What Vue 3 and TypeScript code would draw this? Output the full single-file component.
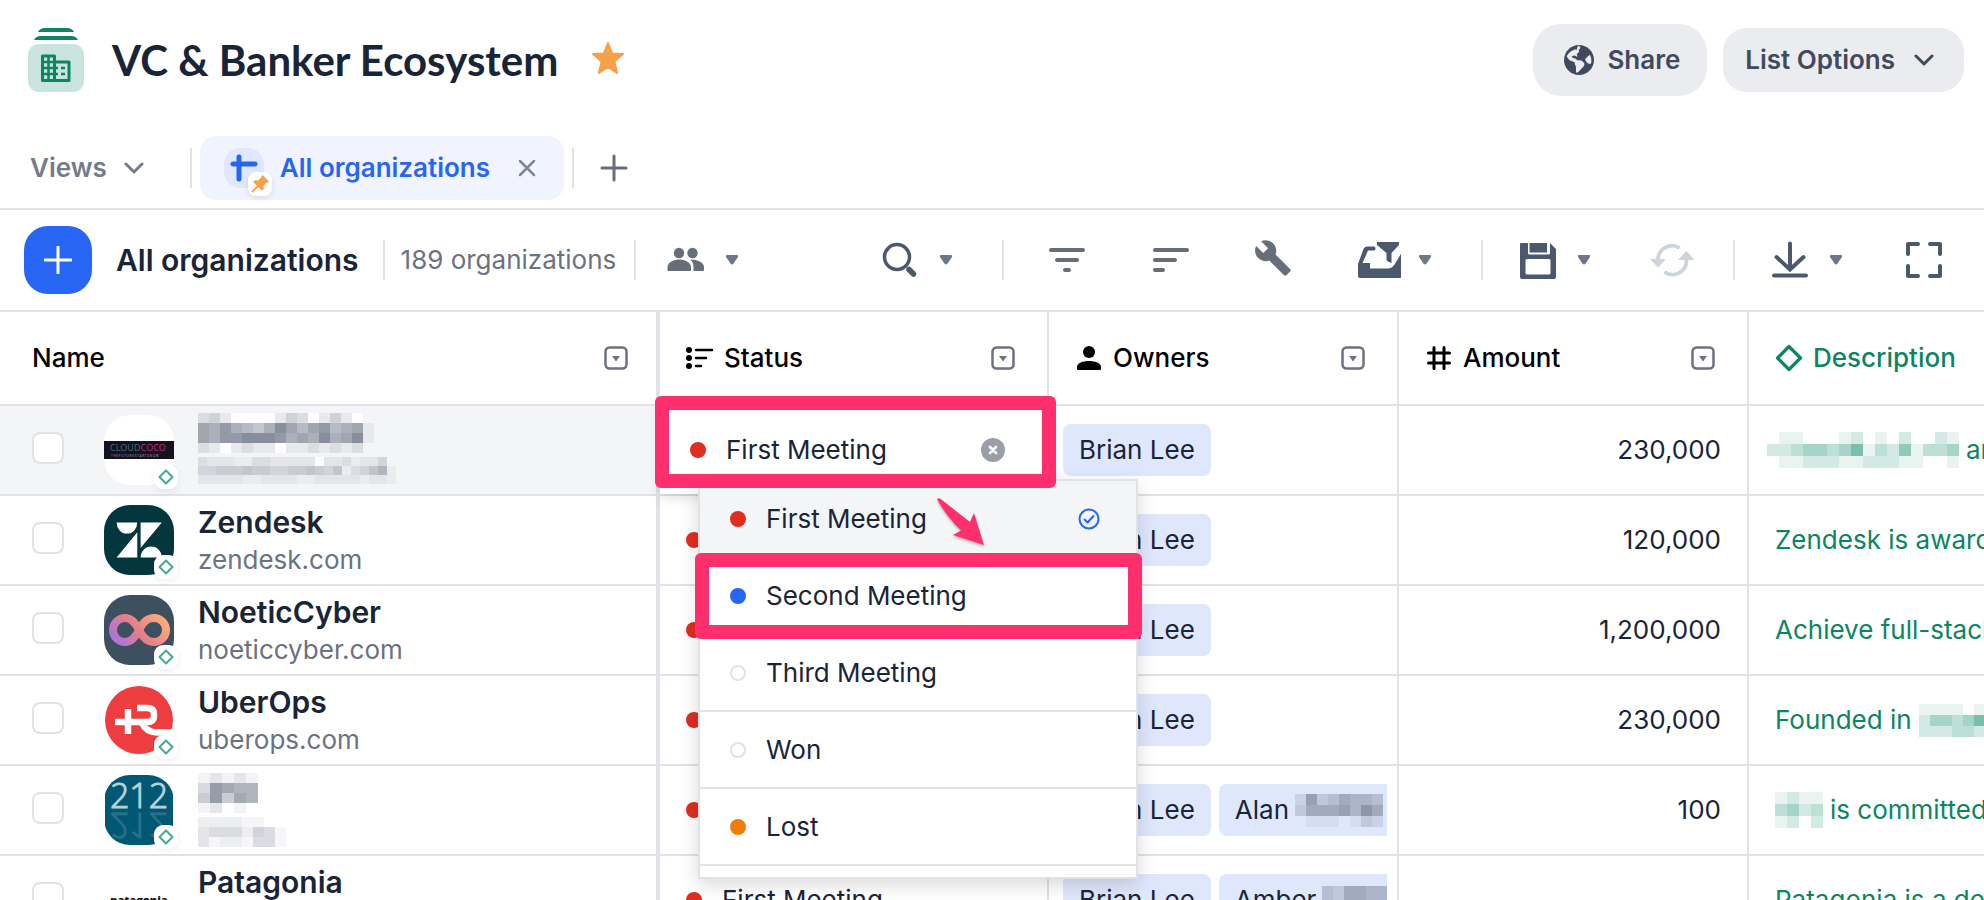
<script setup lang="ts">
import { ref } from 'vue'

interface Mosaic { w: number; h: number; color: string; rows: string[] }
interface Owner { name: string; hidden?: Mosaic }
interface Row {
  logo: string
  name?: string
  domain?: string
  nameMosaic?: Mosaic
  domainMosaic?: Mosaic
  owners: Owner[]
  amount: string
  descBefore?: string
  descMosaic?: Mosaic
  descAfter?: string
}

const SLATE = '#6f7788'
const GREEN = '#0b8a68'

const rows: Row[] = [
  {
    logo: 'cloudcoco',
    nameMosaic: { w: 11, h: 10, color: SLATE, rows: ['231wwww132w131w00', '76865469757856710', '76889998676967910', '21w1211w112121200'] },
    domainMosaic: { w: 9, h: 9, color: SLATE, rows: ['3222113322222w22312240', '4455565544556546134681', '2222211222211222221221'] },
    owners: [{ name: 'Brian Lee' }],
    amount: '230,000',
    descMosaic: { w: 12, h: 12, color: GREEN, rows: ['0110001201020021', '2234434613251334', '0112221122211001'] },
    descAfter: 'an award-winning provider',
  },
  { logo: 'zendesk', name: 'Zendesk', domain: 'zendesk.com', owners: [{ name: 'Brian Lee' }], amount: '120,000', descBefore: 'Zendesk is award-winning software' },
  { logo: 'noetic', name: 'NoeticCyber', domain: 'noeticcyber.com', owners: [{ name: 'Brian Lee' }], amount: '1,200,000', descBefore: 'Achieve full-stack visibility' },
  {
    logo: 'uberops', name: 'UberOps', domain: 'uberops.com', owners: [{ name: 'Brian Lee' }], amount: '230,000', descBefore: 'Founded in',
    descMosaic: { w: 11, h: 11, color: GREEN, rows: ['11110111', '24434643', '22233232'] },
  },
  {
    logo: 'two12',
    nameMosaic: { w: 12, h: 10, color: SLATE, rows: ['12121', '38766', '48476', '12w10'] },
    domainMosaic: { w: 11, h: 10, color: SLATE, rows: ['22221100', '34442541', '31221441'] },
    owners: [
      { name: 'Brian Lee' },
      { name: 'Alan', hidden: { w: 11, h: 11, color: SLATE, rows: ['27346554', '36667586', '01110132'] } },
    ],
    amount: '100',
    descMosaic: { w: 12, h: 12, color: GREEN, rows: ['1211', '3423', '1202'] },
    descAfter: 'is committed to growth',
  },
  {
    logo: 'patagonia', name: 'Patagonia', domain: 'patagonia.com',
    owners: [
      { name: 'Brian Lee' },
      { name: 'Amber', hidden: { w: 11, h: 14, color: SLATE, rows: ['4366550', '3465540'] } },
    ],
    amount: '—', descBefore: 'Patagonia is a designer of outdoor clothing',
  },
]

const options = [
  { label: 'First Meeting', color: 'red' },
  { label: 'Second Meeting', color: 'blue' },
  { label: 'Third Meeting', color: 'none' },
  { label: 'Won', color: 'none' },
  { label: 'Lost', color: 'orange' },
]
const selected = ref('First Meeting')
const marked = 'Second Meeting'

function cells(m: Mosaic) {
  return m.rows.flatMap((line, y) =>
    [...line].map((c, x) => ({
      x: x * m.w,
      y: y * m.h,
      fill: c === 'w' ? '#fff' : m.color,
      opacity: c === 'w' ? 0.9 : Number(c) / 11,
    })),
  )
}
const mosaicWidth = (m: Mosaic) => m.rows[0].length * m.w
const mosaicHeight = (m: Mosaic) => m.rows.length * m.h
</script>

<template>
  <div class="app">
    <header class="head">
      <svg class="list-icon" width="56" height="64" viewBox="0 0 56 64" aria-hidden="true">
        <path d="M10 4q2-4 7-4h22q5 0 7 4zM6 12q2-4 7-4h30q5 0 7 4z" fill="#0b8562" />
        <rect y="16" width="56" height="48" rx="11" fill="#c8e4dd" />
        <g fill="none" stroke="#0b8562" stroke-width="3" stroke-linejoin="round">
          <path d="M14.500 28h12v24.500h-12zM26.500 34h14.500v18.500h-14.500" />
          <path d="M14 34h12M14 40h12M14 46h12M20.500 28v24" stroke-width="2.500" />
          <path d="M33 40h4M33 46h4M27 40h3M27 46h3" stroke-width="2.500" />
        </g>
      </svg>
      <h1>VC &amp; Banker Ecosystem</h1>
      <button class="star" aria-label="Favorite">
        <svg width="34" height="34" viewBox="0 0 34 34"><path d="M17 2l4.200 10.500 10.800.6-8.600 7.400 2.800 11.500-9.200-6.200L7.800 32l2.800-11.500L2 13.100l10.800-.6z" fill="#f5a04a" stroke="#f5a04a" stroke-width="2" stroke-linejoin="round" /></svg>
      </button>
      <div class="head-actions">
        <button class="pill share">
          <svg width="30" height="30" viewBox="0 8 496 496" aria-hidden="true"><path fill="#404a5c" d="M248 8C111.030 8 0 119.030 0 256s111.030 248 248 248 248-111.030 248-248S384.970 8 248 8z" /><path fill="#ebecf0" d="M215 52v18c0 12-12 20-24 14l-8-4C120 100 72 140 44 196q22 36 46 66c26 12 60 20 90 34-6 16 0 40 12 56 8 10 6 26 6 40v70q18 6 38-8l76-78q42-44 14-78l-32-30c-24-8-50-6-78-8-12-20-26-32-52-34l-32-14c-8-14 8-22 22-26l26-4 30 22 14-12-14-36 30-26 10-22-8-20 24-22q12-12 0-26l-24-22zM400 190l-46 46q-8 14 2 30l22 32q8 12 22 16l42 10q14-34 10-74-4-46-26-80z" /></svg>
          Share
        </button>
        <button class="pill options">
          List Options
          <svg width="20" height="12" viewBox="0 0 20 12" aria-hidden="true"><path d="M2 2l8 8 8-8" class="line" /></svg>
        </button>
      </div>
    </header>

    <nav class="tabs" aria-label="Views">
      <button class="views">
        Views
        <svg width="20" height="12" viewBox="0 0 20 12" aria-hidden="true"><path d="M2 2l8 8 8-8" class="line" /></svg>
      </button>
      <span class="rule" />
      <div class="tab">
        <span class="tab-icon">
          <svg width="40" height="40" viewBox="0 0 40 40" aria-hidden="true"><path d="M9 16h22M15 9v22" fill="none" stroke="#2765f4" stroke-width="5" stroke-linecap="round" /></svg>
          <span class="pin">
            <svg width="20" height="20" viewBox="0 0 20 20" aria-hidden="true"><path d="M12.500 1l6.500 6.500-1.200 1.200-1-.2-3.300 3.300.2 3.300-1.600 1.700-3.800-3.800L2.600 18.700 1.300 17.400 7 11.700 3.200 7.900l1.700-1.600 3.300.2 3.300-3.300-.2-1z" fill="#f5a04a" /></svg>
          </span>
        </span>
        <a href="#all">All organizations</a>
        <button aria-label="Close view">
          <svg width="18" height="18" viewBox="0 0 18 18"><path d="M2 2l14 14M16 2L2 16" fill="none" stroke="#808794" stroke-width="2.500" stroke-linecap="round" /></svg>
        </button>
      </div>
      <span class="rule" />
      <button class="add-view" aria-label="Add view">
        <svg width="28" height="28" viewBox="0 0 28 28"><path d="M14 2v24M2 14h24" fill="none" stroke="#666e7a" stroke-width="3" stroke-linecap="round" /></svg>
      </button>
    </nav>

    <div class="toolbar">
      <button class="create" aria-label="Add organization">
        <svg width="28" height="28" viewBox="0 0 28 28"><path d="M14 1v26M1 14h26" fill="none" stroke="#fff" stroke-width="3" stroke-linecap="round" /></svg>
      </button>
      <h2>All organizations</h2>
      <span class="rule" />
      <span class="count">189 organizations</span>
      <span class="rule" />
      <button class="tool people" aria-label="Sharing">
        <svg width="44" height="44" viewBox="0 0 44 44"><g fill="#666e7a"><circle cx="15" cy="15" r="5.200" /><circle cx="28.500" cy="15" r="5.200" /><path d="M3.500 32v-3c0-5 7-7.500 11.800-7.500S27 24 27 29v3q0 1-1 1H4.500q-1 0-1-1zM27.500 21.500c5 .3 12.500 2.500 12.500 7.500v3q0 1-1 1h-9.500v-4.500c0-3-1.200-5.400-3-6.800z" /></g></svg>
        <svg class="caret" width="12" height="10" viewBox="0 0 12 10"><path d="M0 1q0-1 1-1h10q1 0 1 1v1L7.500 8.500q-1.500 2-3 0L0 2z" /></svg>
      </button>

      <div class="tools">
        <button class="tool" aria-label="Search">
          <svg width="44" height="44" viewBox="0 0 44 44"><g fill="none" stroke="#4b586e"><circle cx="19" cy="19" r="12.500" stroke-width="3.500" /><path d="M31 31.500l4.500 4.500" stroke-width="5.500" stroke-linecap="round" /></g></svg>
          <svg class="caret" width="12" height="10" viewBox="0 0 12 10"><path d="M0 1q0-1 1-1h10q1 0 1 1v1L7.500 8.500q-1.500 2-3 0L0 2z" /></svg>
        </button>
        <span class="rule after-caret" />
        <div class="group view-group">
          <button class="tool" aria-label="Filter"><svg width="44" height="44" viewBox="0 0 44 44"><path d="M6 12h32M12 22h20M20 32h4" class="bars" /></svg></button>
          <button class="tool" aria-label="Sort"><svg width="44" height="44" viewBox="0 0 44 44"><path d="M6 12h32M6 22h20M6 32h8" class="bars" /></svg></button>
          <button class="tool" aria-label="Settings"><svg width="44" height="44" viewBox="0 0 44 44"><g transform="translate(.5 .5) scale(1.620)"><path fill="#666e7a" d="M22.700 19l-9.100-9.100c.9-2.300.4-5-1.500-6.900-2-2-5-2.400-7.400-1.300L9 6 6 9 1.600 4.700C.4 7.100.9 10.100 2.900 12.100c1.900 1.900 4.600 2.400 6.900 1.500l9.100 9.100c.4.400 1 .4 1.400 0l2.300-2.300c.5-.4.5-1.100.1-1.400z" /></g></svg></button>
          <button class="tool" aria-label="Saved filters">
            <svg width="44" height="44" viewBox="0 0 44 44"><g fill="#4b586e"><path d="M20 4h22v3l-7.500 8v10q-4-1-5-3v-7L20 7zM1 26L6.500 11q1-2.500 3.500-2.500h7q1.500 0 1.500 2t-1.500 2h-6L5.500 25h7.500v5.500h17.500q5 0 8-5.500l6-10v23q0 2-2 2H3q-2 0-2-2z" /></g></svg>
            <svg class="caret" width="12" height="10" viewBox="0 0 12 10"><path d="M0 1q0-1 1-1h10q1 0 1 1v1L7.500 8.500q-1.500 2-3 0L0 2z" /></svg>
          </button>
        </div>
        <span class="rule after-caret" />
        <div class="group">
          <button class="tool" aria-label="Save">
            <svg width="44" height="44" viewBox="0 0 44 44"><path fill="#4b586e" fill-rule="evenodd" d="M5 5h7v10q0 1.500 1.500 1.500h19q1.500 0 1.500-1.500V5l6 6v28q0 2-2 2H6q-2 0-2-2V6q0-1 1-1zM11 21q-1.500 0-1.500 1.500V35q0 1.500 1.500 1.500h22q1.500 0 1.500-1.500V22.500q0-1.500-1.500-1.500zM13.500 5h17.500v9.500H13.500z" /></svg>
            <svg class="caret" width="12" height="10" viewBox="0 0 12 10"><path d="M0 1q0-1 1-1h10q1 0 1 1v1L7.500 8.500q-1.500 2-3 0L0 2z" /></svg>
          </button>
          <button class="tool" aria-label="Refresh" disabled>
            <svg width="44" height="44" viewBox="0 0 44 44"><g fill="none" stroke="#cdd4de" stroke-width="3.800"><path d="M8 22A14 14 0 0 1 29.500 10M36.500 22A14 14 0 0 1 14.500 34" /></g><path d="M0 21h16l-8 8.500zM28 22l8.500-9 8 9z" fill="#cdd4de" /></svg>
          </button>
        </div>
        <span class="rule after-icon" />
        <div class="group">
          <button class="tool" aria-label="Download">
            <svg width="44" height="44" viewBox="0 0 44 44"><path d="M22 5.500v24M8.500 19L22 31.500 35.500 19M6 37.500h32" fill="none" stroke="#4b586e" stroke-width="4" stroke-linecap="round" /></svg>
            <svg class="caret" width="12" height="10" viewBox="0 0 12 10"><path d="M0 1q0-1 1-1h10q1 0 1 1v1L7.500 8.500q-1.500 2-3 0L0 2z" /></svg>
          </button>
          <button class="tool" aria-label="Full screen"><svg width="44" height="44" viewBox="0 0 44 44"><path d="M6 16V6h10M28 6h10v10M38 28v10H28M16 38H6V28" fill="none" stroke="#4b586e" stroke-width="4" stroke-linecap="round" stroke-linejoin="round" /></svg></button>
        </div>
      </div>
    </div>

    <table>
      <colgroup><col class="c-name" /><col class="c-status" /><col class="c-owner" /><col class="c-amount" /><col /></colgroup>
      <thead>
        <tr>
          <th class="name-cell"><div class="th"><span>Name</span><button class="col-menu" aria-label="Name column menu"><svg width="24" height="24" viewBox="0 0 24 24"><rect x="1.500" y="1.500" width="21" height="21" rx="4" /><path d="M8 10h8l-4 5.500z" /></svg></button></div></th>
          <th><div class="th"><svg width="28" height="24" viewBox="0 0 28 24"><path d="M10 4h16M10 12h10M10 20h5" fill="none" stroke="#000" stroke-width="2.500" stroke-linecap="round" /><circle cx="3" cy="4" r="3" /><circle cx="3" cy="12" r="3" /><circle cx="3" cy="20" r="3" /></svg><span>Status</span><button class="col-menu" aria-label="Status column menu"><svg width="24" height="24" viewBox="0 0 24 24"><rect x="1.500" y="1.500" width="21" height="21" rx="4" /><path d="M8 10h8l-4 5.500z" /></svg></button></div></th>
          <th><div class="th"><svg width="28" height="24" viewBox="-2 0 28 24"><circle cx="12" cy="6" r="6" /><path d="M0 23v-2c0-4 6-6 12-6s12 2 12 6v2q0 1-1 1H1q-1 0-1-1z" /></svg><span>Owners</span><button class="col-menu" aria-label="Owners column menu"><svg width="24" height="24" viewBox="0 0 24 24"><rect x="1.500" y="1.500" width="21" height="21" rx="4" /><path d="M8 10h8l-4 5.500z" /></svg></button></div></th>
          <th><div class="th"><svg width="28" height="24" viewBox="-2 0 28 24"><path d="M7 1.500v21M17 1.500v21M1.500 7h21M1.500 17h21" fill="none" stroke="#000" stroke-width="3" stroke-linecap="round" /></svg><span>Amount</span><button class="col-menu" aria-label="Amount column menu"><svg width="24" height="24" viewBox="0 0 24 24"><rect x="1.500" y="1.500" width="21" height="21" rx="4" /><path d="M8 10h8l-4 5.500z" /></svg></button></div></th>
          <th class="desc"><div class="th"><svg width="28" height="28" viewBox="0 0 28 28"><path d="M14 2.500L25.500 14 14 25.500 2.500 14z" fill="none" stroke="#0b8562" stroke-width="3.200" stroke-linejoin="round" /></svg><span>Description</span></div></th>
        </tr>
      </thead>
      <tbody>
        <tr v-for="(row, i) in rows" :key="row.logo">
          <td class="name-cell" :class="{ active: i === 0 }">
            <div class="org">
              <input type="checkbox" :aria-label="'Select ' + (row.name ?? 'organization')" />
              <span class="avatar">
                <svg width="70" height="70" viewBox="0 0 70 70" aria-hidden="true">
                  <template v-if="row.logo === 'cloudcoco'">
                    <rect width="70" height="70" fill="#fff" />
                    <rect y="26" width="70" height="18" fill="#15121f" />
                    <text x="6" y="36" font-family="Open Sans, sans-serif" font-size="9"><tspan fill="#42717a">CLOUD</tspan><tspan fill="#c92a84">COCO</tspan></text>
                    <text x="7" y="42" font-family="Open Sans, sans-serif" font-size="3" fill="#a9a9b5">T H E F U T U R E S T A R T S N O W</text>
                  </template>
                  <template v-else-if="row.logo === 'zendesk'">
                    <rect width="70" height="70" fill="#03363d" />
                    <path fill="#fff" d="M12.600 17.600h20.700a10.350 11 0 0 1-20.700 0zM36.600 17.600h21.200L36.600 43zM33.300 27.300v25.300H12.600zM36.600 52.600a10.600 11 0 0 1 21.200 0z" />
                  </template>
                  <template v-else-if="row.logo === 'noetic'">
                    <defs><linearGradient id="noetic" x1="0" x2="1" y1=".7" y2=".3"><stop offset="0" stop-color="#b274d6" /><stop offset=".45" stop-color="#e37f8c" /><stop offset="1" stop-color="#fba87c" /></linearGradient></defs>
                    <rect width="70" height="70" fill="#3d5060" />
                    <path d="M35 35C31 27 27 23 21 23a12 12 0 0 0 0 24c6 0 10-4 14-12s8-12 15-12a12 12 0 0 1 0 24c-6 0-11-4-15-12z" fill="none" stroke="url(#noetic)" stroke-width="8" />
                  </template>
                  <template v-else-if="row.logo === 'uberops'">
                    <rect width="70" height="70" fill="#fff" />
                    <circle cx="35" cy="35" r="34" fill="#ee3d3e" />
                    <path d="M24 24v25M11 37h32q7 0 7-6v-2q0-6-7-6H33M38 38q4 9 15 9.500h15" fill="none" stroke="#fff" stroke-width="6.500" />
                  </template>
                  <template v-else-if="row.logo === 'two12'">
                    <rect x="1" width="68" height="70" fill="#005873" />
                    <g font-family="Open Sans, sans-serif" font-size="34" text-anchor="middle" font-weight="300">
                      <text x="35" y="33" fill="#b5d2da" stroke="#b5d2da">212</text>
                      <text x="35" y="-38" transform="scale(1 -1)" fill="#2b7189" stroke="#2b7189">212</text>
                    </g>
                  </template>
                  <template v-else>
                    <rect width="70" height="70" fill="#fff" />
                    <text x="35" y="39" font-family="Open Sans, sans-serif" font-weight="800" font-size="11" text-anchor="middle" fill="#111">patagonia</text>
                  </template>
                </svg>
                <span class="badge"><svg width="16" height="16" viewBox="0 0 16 16" aria-hidden="true"><path d="M8 1.500L14.500 8 8 14.500 1.500 8z" fill="none" stroke="#47a98d" stroke-width="2" stroke-linejoin="round" /></svg></span>
              </span>
              <div class="org-text">
                <span class="org-name">
                  <template v-if="row.name">{{ row.name }}</template>
                  <svg v-else-if="row.nameMosaic" :width="mosaicWidth(row.nameMosaic)" :height="mosaicHeight(row.nameMosaic)" role="img" aria-label="Hidden name" shape-rendering="crispEdges">
                    <rect v-for="(c, k) in cells(row.nameMosaic)" :key="k" :x="c.x" :y="c.y" :width="row.nameMosaic.w" :height="row.nameMosaic.h" :fill="c.fill" :fill-opacity="c.opacity" />
                  </svg>
                </span>
                <span class="org-domain">
                  <template v-if="row.domain">{{ row.domain }}</template>
                  <svg v-else-if="row.domainMosaic" :width="mosaicWidth(row.domainMosaic)" :height="mosaicHeight(row.domainMosaic)" role="img" aria-label="Hidden domain" shape-rendering="crispEdges">
                    <rect v-for="(c, k) in cells(row.domainMosaic)" :key="k" :x="c.x" :y="c.y" :width="row.domainMosaic.w" :height="row.domainMosaic.h" :fill="c.fill" :fill-opacity="c.opacity * 0.7" />
                  </svg>
                </span>
              </div>
            </div>
          </td>

          <td class="status">
            <div v-if="i > 0" class="status-value"><span class="dot red" />First Meeting</div>
            <template v-else>
              <div class="editor">
                <span class="dot red" /><span class="editor-text">{{ selected }}</span>
                <button class="clear" aria-label="Clear status"><svg width="24" height="24" viewBox="0 0 24 24"><circle cx="12" cy="12" r="12" fill="#9a9ea8" /><path d="M9 9l6 6M15 9l-6 6" stroke="#fff" stroke-width="2.800" stroke-linecap="round" /></svg></button>
              </div>
              <div class="menu">
                <ul>
                  <li v-for="o in options" :key="o.label" :class="{ chosen: o.label === selected }">
                    <button @click="selected = o.label">
                      <span class="dot" :class="o.color" />{{ o.label }}
                      <svg v-if="o.label === selected" class="check" width="22" height="22" viewBox="0 0 22 22" aria-hidden="true"><circle cx="11" cy="11" r="9.500" /><path d="M6.500 11.500l3 3 6-6.500" /></svg>
                    </button>
                    <span v-if="o.label === marked" class="frame item-frame" />
                  </li>
                </ul>
                <svg class="pointer" width="56" height="56" viewBox="0 0 56 56" aria-hidden="true"><path d="M3 3Q5 1 8 4L36 26l4-9 10 32-31-10 8-4.500Q12 20 3 3z" fill="#ff2f6d" /></svg>
              </div>
              <span class="frame cell-frame" />
            </template>
          </td>

          <td>
            <div class="owners">
              <span v-for="o in row.owners" :key="o.name" class="chip">
                {{ o.name }}
                <svg v-if="o.hidden" :width="mosaicWidth(o.hidden)" :height="mosaicHeight(o.hidden)" role="img" aria-label="Hidden surname" shape-rendering="crispEdges">
                  <rect v-for="(c, k) in cells(o.hidden)" :key="k" :x="c.x" :y="c.y" :width="o.hidden.w" :height="o.hidden.h" :fill="c.fill" :fill-opacity="c.opacity" />
                </svg>
              </span>
            </div>
          </td>
          <td class="amount" :class="{ empty: row.amount === '—' }">{{ row.amount }}</td>
          <td class="desc">
            <div class="desc-line">
              <span v-if="row.descBefore">{{ row.descBefore }}</span>
              <svg v-if="row.descMosaic" :class="{ lead: i === 0 }" :width="mosaicWidth(row.descMosaic)" :height="mosaicHeight(row.descMosaic)" role="img" aria-label="Hidden text" shape-rendering="crispEdges">
                <rect v-for="(c, k) in cells(row.descMosaic)" :key="k" :x="c.x" :y="c.y" :width="row.descMosaic.w" :height="row.descMosaic.h" :fill="c.fill" :fill-opacity="c.opacity" />
              </svg>
              <span v-if="row.descAfter">{{ row.descAfter }}</span>
            </div>
          </td>
        </tr>
      </tbody>
    </table>
  </div>
</template>

<style>
body { margin: 0; background: #fff; }
</style>

<style scoped>
.app {
  --line: #e1e2e8;
  --ink: #1a2437;
  --muted: #6b7280;
  --pink: #ff2f6d;
  height: 100vh;
  overflow: hidden;
  box-sizing: border-box;
  background: #fff;
  color: var(--ink);
  font-family: Inter, "Liberation Sans", sans-serif;
  font-size: 26px;
  line-height: 34px;
}
.app *, .app *::before { box-sizing: border-box; }
button { border: 0; background: none; padding: 0; font: inherit; color: inherit; display: inline-flex; align-items: center; cursor: pointer; }
svg { display: block; flex: none; }
.line { fill: none; stroke: currentColor; stroke-width: 3; stroke-linecap: round; stroke-linejoin: round; }
.rule { width: 2px; height: 40px; background: var(--line); flex: none; }

.head { display: flex; align-items: center; height: 120px; padding: 0 20px 0 28px; }
h1 { margin: 0; font-family: Lato, "Open Sans", sans-serif; font-size: 42px; line-height: 48px; font-weight: 700; white-space: nowrap; padding-left: 28px; }
.star { padding-left: 33px; }
.star svg { margin-bottom: 4px; }
.head-actions { display: flex; align-items: center; gap: 16px; margin-left: auto; }
.pill { background: #ebecf0; color: #404a5c; font-weight: 600; white-space: nowrap; }
.share { height: 72px; border-radius: 28px; padding: 0 27px 0 31px; gap: 13px; }
.options { height: 64px; border-radius: 24px; padding: 0 30px 0 22px; gap: 19px; }

.tabs { display: flex; align-items: center; height: 90px; padding: 8px 30px 0; border-bottom: 2px solid var(--line); color: #747b89; font-weight: 600; }
.views { gap: 17px; margin-right: 46px; }
.tab { display: flex; align-items: center; height: 64px; margin: 0 8px; padding: 0 28px 0 24px; border-radius: 16px; background: #f1f4fe; }
.tab a { color: #2765f4; text-decoration: none; margin: 0 28px 0 16px; white-space: nowrap; }
.tab-icon { position: relative; border-radius: 16px; background: #dfe8fd; }
.pin { position: absolute; left: 24px; top: 24px; width: 24px; height: 24px; border-radius: 8px; background: #fff; display: grid; place-items: center; box-shadow: 0 2px 6px #0000001a; }
.add-view { margin-left: 26px; }

.toolbar { display: flex; align-items: center; height: 102px; padding: 0 38px 0 24px; border-bottom: 2px solid var(--line); }
.create { width: 68px; height: 68px; border-radius: 24px; background: #2765f4; justify-content: center; flex: none; }
h2 { margin: 0 24px; font-size: 30px; line-height: 38px; font-weight: 600; white-space: nowrap; }
.count { margin: 0 18px 0 16px; color: var(--muted); white-space: nowrap; }
.tool { gap: 18px; }
.people { margin-left: 28px; }
.caret { fill: #6f7785; }
.bars { fill: none; stroke: #666e7a; stroke-width: 4; stroke-linecap: round; }
.tools { display: flex; align-items: center; margin-left: auto; }
.group { display: flex; align-items: center; gap: 60px; margin-left: 33px; }
.view-group { margin-left: 41px; }
.after-caret { margin-left: 50px; }
.after-icon { margin-left: 39px; }

table { width: 100%; table-layout: fixed; border-collapse: separate; border-spacing: 0; }
.c-name { width: 660px; }
.c-status { width: 389px; }
.c-owner, .c-amount { width: 350px; }
th, td { padding: 0; border-bottom: 2px solid var(--line); border-right: 2px solid var(--line); text-align: left; font-weight: 400; height: 90px; white-space: nowrap; }
th { height: 94px; color: #000; font-weight: 500; }
.name-cell { border-right-width: 4px; }
.th { display: flex; align-items: center; padding: 0 32px 0 26px; }
.th > svg { margin-right: 10px; }
.name-cell .th { padding: 0 28px 0 32px; }
.col-menu { margin-left: auto; }
.col-menu rect { fill: none; stroke: #6b7280; stroke-width: 2.500; }
.col-menu path { fill: #6b7280; }
.desc { color: #0b8562; border-right: 0; overflow: hidden; }

.active { background: #f4f5f7; }
.org { display: flex; align-items: center; padding-left: 32px; }
input[type="checkbox"] { appearance: none; width: 32px; height: 32px; margin: 0 40px 4px 0; border: 2px solid var(--line); border-radius: 8px; background: #fff; }
.avatar { position: relative; margin-right: 24px; }
.avatar > svg { border-radius: 26px; }
.badge { position: absolute; left: 50px; top: 50px; width: 24px; height: 24px; border-radius: 9px; background: #fff; display: grid; place-items: center; box-shadow: 0 2px 6px #00000012; }
.org-text { display: flex; flex-direction: column; gap: 2px; }
.org-name { height: 38px; font-size: 30px; line-height: 38px; font-weight: 600; }
.org-domain { height: 34px; line-height: 34px; color: var(--muted); }
.org-domain svg { margin-top: 4px; }

.status { position: relative; }
.status-value { display: flex; align-items: center; gap: 20px; padding-left: 26px; }
.dot { width: 16px; height: 16px; border-radius: 50%; flex: none; }
.red { background: #e02d20; }
.blue { background: #2765f4; }
.orange { background: #ee7d0c; }
.none { border: 2px solid var(--line); background: #fff; }
.editor { position: absolute; inset: 0 -2px 0 0; z-index: 1; display: flex; align-items: center; gap: 20px; padding: 0 44px 0 30px; background: #fff; box-shadow: 0 4px 12px #0000001f; }
.clear { margin-left: auto; }
.menu { position: absolute; left: 38px; top: 73px; z-index: 2; width: 440px; border: 2px solid var(--line); background: #fff; box-shadow: 0 6px 18px #00000026; }
.menu ul { list-style: none; margin: 0; padding: 0 0 11px; }
.menu li { position: relative; height: 77px; border-bottom: 2px solid var(--line); }
.menu li button { width: 100%; height: 100%; gap: 20px; padding: 0 36px 0 30px; }
.menu li.chosen { background: #f4f5f7; }
.check { margin-left: auto; fill: none; stroke: #2765f4; stroke-width: 2; stroke-linecap: round; stroke-linejoin: round; }
.frame { position: absolute; border: 14px solid var(--pink); border-radius: 6px; pointer-events: none; }
.cell-frame { z-index: 3; inset: -10px -9px 6px -5px; }
.item-frame { z-index: 1; inset: -5px -6px -6px -5px; }
.pointer { position: absolute; left: 234px; top: 15px; filter: drop-shadow(0 2px 1px #00000040); }

.owners { display: flex; gap: 8px; margin: 0 10px 0 14px; overflow: hidden; }
.chip { display: flex; align-items: center; gap: 6px; height: 52px; padding: 0 16px; border-radius: 8px; background: #dfe7fd; flex: none; }
.amount { text-align: right; padding-right: 26px; }
.empty { color: #8a909c; }
.desc-line { display: flex; align-items: center; gap: 7px; padding-left: 26px; }
.lead { margin-left: -8px; }
</style>
